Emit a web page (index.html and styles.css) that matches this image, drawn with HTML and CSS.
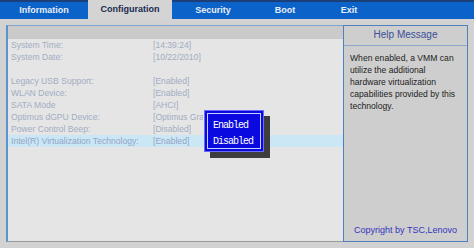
FILE: index.html
```html
<!DOCTYPE html>
<html lang="en">

<head>
    <meta charset="UTF-8">
    <meta name="viewport" content="width=device-width, initial-scale=1.0">
    <title>BIOS Setup</title>
    <link rel="stylesheet" href="styles.css">
</head>

<body>
    <div class="menu-bar">
        <div class="tab">Information</div>
        <div class="tab active">Configuration</div>
        <div class="tab tab-security">Security</div>
        <div class="tab tab-boot">Boot</div>
        <div class="tab tab-exit">Exit</div>
    </div>
    <div class="screen">
        <div class="main-panel">
            <div class="panel-head"></div>
            <div class="item-list">
                <div class="item"><span class="item-name">System Time:</span><span class="item-val">[14:39:24]</span></div>
                <div class="item"><span class="item-name">System Date:</span><span class="item-val">[10/22/2010]</span></div>
                <div class="item blank"></div>
                <div class="item"><span class="item-name">Legacy USB Support:</span><span class="item-val">[Enabled]</span></div>
                <div class="item"><span class="item-name">WLAN Device:</span><span class="item-val">[Enabled]</span></div>
                <div class="item"><span class="item-name">SATA Mode</span><span class="item-val">[AHCI]</span></div>
                <div class="item"><span class="item-name">Optimus dGPU Device:</span><span class="item-val clipped">[Optimus Graphics]</span></div>
                <div class="item"><span class="item-name">Power Control Beep:</span><span class="item-val">[Disabled]</span></div>
                <div class="item selected"><span class="item-name">Intel(R) Virtualization Technology:</span><span class="item-val">[Enabled]</span></div>
            </div>
            <div class="popup">
                <div class="popup-inner">
                    <div>Enabled</div>
                    <div>Disabled</div>
                </div>
            </div>
        </div>
        <div class="help-panel">
            <div class="help-title">Help Message</div>
            <div class="help-text">When enabled, a VMM can utilize the additional hardware virtualization capabilities provided by this technology.</div>
            <div class="copyright">Copyright by TSC,Lenovo</div>
        </div>
    </div>
</body>

</html>
```

FILE: styles.css
```css
* {
    margin: 0;
    padding: 0;
    box-sizing: border-box;
}

body {
    width: 474px;
    height: 248px;
    overflow: hidden;
    background-color: #d2d2d2;
    font-family: "Liberation Sans", Arial, sans-serif;
}

.menu-bar {
    display: flex;
    height: 19px;
    background-color: #0b62c9;
    border-top: 2px solid #1d3f78;
}

.tab {
    width: 88px;
    text-align: center;
    color: #e8eef8;
    font-size: 9px;
    font-weight: bold;
    line-height: 16px;
}

.tab.active {
    width: 84px;
    margin-top: -2px;
    line-height: 18px;
    height: 19px;
    background-color: #d4d4d4;
    color: #1a2a50;
}

.tab-security {
    width: 82px;
}

.tab-boot {
    width: 50px;
    margin-left: 6px;
}

.tab-exit {
    width: 56px;
    margin-left: 11px;
}

.screen {
    display: flex;
    padding: 6px 0 0 6px;
    height: 229px;
}

.main-panel {
    position: relative;
    width: 337px;
    height: 217px;
    background-color: #e5e5e5;
    border-left: 2px solid #5b93cf;
    border-top: 1px solid #7ea6cf;
    border-bottom: 1px solid #9a9a9a;
}

.panel-head {
    height: 13px;
    background-color: #cacaca;
}

.item {
    display: flex;
    height: 12px;
    line-height: 12px;
    font-size: 8.6px;
    color: #a2adc2;
    padding-left: 3px;
    white-space: nowrap;
}

.item.selected {
    background-color: #cbe7f6;
    color: #93a4c4;
}

.item-name {
    width: 142px;
}

.item-val.clipped {
    width: 50px;
    overflow: hidden;
}

.popup {
    position: absolute;
    left: 196px;
    top: 84px;
    width: 60px;
    height: 42px;
    background-color: #0a0ae0;
    padding: 2px;
    box-shadow: 6px 6px 0 #3e3e3e;
    border: 1px solid #6a6aff;
}

.popup-inner {
    height: 100%;
    border: 1px solid #c8d0ff;
    padding: 4px 0 0 5px;
    color: #ffffff;
    font-family: "Liberation Mono", "Courier New", monospace;
    font-size: 10px;
    letter-spacing: -1px;
    line-height: 16px;
}

.help-panel {
    display: flex;
    flex-direction: column;
    width: 125px;
    height: 217px;
    background-color: #cecece;
    border: 1px solid #4f82bd;
}

.help-title {
    height: 20px;
    line-height: 18px;
    text-align: center;
    font-size: 10px;
    color: #3a4f98;
    border-bottom: 1px solid #8aa6c8;
}

.help-text {
    padding: 6px 4px 0 6px;
    font-size: 8.6px;
    line-height: 12px;
    color: #222222;
    flex: 1;
}

.copyright {
    text-align: center;
    font-size: 9px;
    color: #3434c0;
    padding-bottom: 6px;
}
```
